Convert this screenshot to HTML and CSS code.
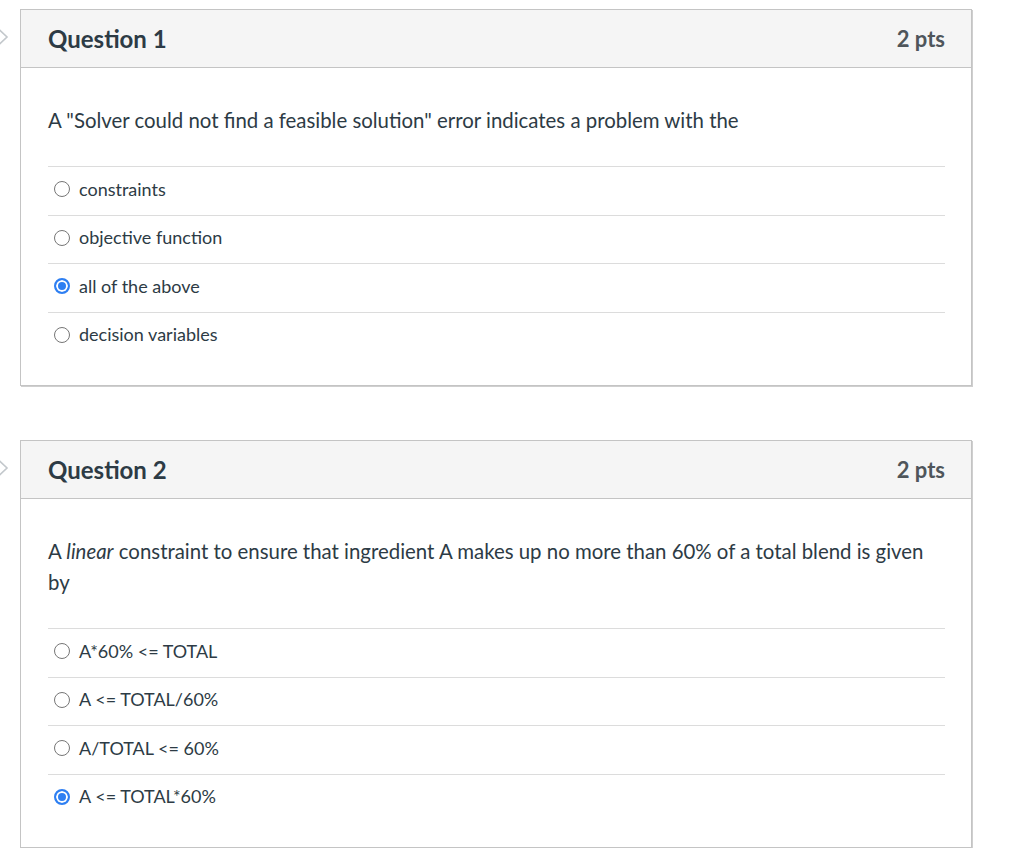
FILE: index.html
```html
<!DOCTYPE html>
<html>
<head>
<meta charset="utf-8">
<link rel="stylesheet" href="styles.css">
</head>
<body>
<div class="question-row">
  <div class="chev"><svg width="12" height="18" viewBox="0 0 12 18"><path d="M1 1.5 L9 9 L1 16.5" fill="none" stroke="#c3c8cc" stroke-width="1.6"/></svg></div>
  <div class="card">
    <div class="card-head">
      <span class="q-title">Question 1</span>
      <span class="q-pts">2 pts</span>
    </div>
    <div class="card-body">
      <div class="q-text">A "Solver could not find a feasible solution" error indicates a problem with the</div>
      <div class="answers">
        <div class="answer"><span class="radio"></span><span>constraints</span></div>
        <div class="answer"><span class="radio"></span><span>objective function</span></div>
        <div class="answer"><span class="radio checked"></span><span>all of the above</span></div>
        <div class="answer"><span class="radio"></span><span>decision variables</span></div>
      </div>
    </div>
  </div>
</div>
<div class="question-row second">
  <div class="chev"><svg width="12" height="18" viewBox="0 0 12 18"><path d="M1 1.5 L9 9 L1 16.5" fill="none" stroke="#c3c8cc" stroke-width="1.6"/></svg></div>
  <div class="card">
    <div class="card-head">
      <span class="q-title">Question 2</span>
      <span class="q-pts">2 pts</span>
    </div>
    <div class="card-body">
      <div class="q-text">A <em>linear</em> constraint to ensure that ingredient A makes up no more than 60% of a total blend is given by</div>
      <div class="answers">
        <div class="answer"><span class="radio"></span><span>A*60% &lt;= TOTAL</span></div>
        <div class="answer"><span class="radio"></span><span>A &lt;= TOTAL/60%</span></div>
        <div class="answer"><span class="radio"></span><span>A/TOTAL &lt;= 60%</span></div>
        <div class="answer"><span class="radio checked"></span><span>A &lt;= TOTAL*60%</span></div>
      </div>
    </div>
  </div>
</div>
</body>
</html>
```
FILE: styles.css
```css
html, body {
  margin: 0;
  padding: 0;
  background: #fff;
}
body {
  font-family: Lato, "Noto Sans", sans-serif;
  color: #2d3b45;
  padding-top: 9px;
}
.question-row {
  display: flex;
  align-items: flex-start;
}
.question-row.second {
  margin-top: 54px;
}
.chev {
  width: 20px;
  flex: 0 0 20px;
  padding-top: 19px;
  overflow: hidden;
}
.chev svg {
  display: block;
  margin-left: -2px;
}
.card {
  width: 950px;
  border: 1px solid #c4c4c4;
  box-shadow: 1px 1px 0 #cfcfcf;
}
.card-head {
  height: 57px;
  background: #f5f5f5;
  border-bottom: 1px solid #c4c4c4;
  display: flex;
  align-items: center;
  justify-content: space-between;
  padding: 0 26px 0 27px;
}
.q-title {
  font-size: 24px;
  font-weight: 700;
  color: #2d3b45;
}
.q-pts {
  font-size: 22px;
  font-weight: 700;
  color: #4f565b;
}
.card-body {
  padding: 37px 26px 25px 27px;
}
.q-text {
  font-size: 20.4px;
  line-height: 31px;
  padding-right: 12px;
}
.answers {
  margin-top: 30px;
}
.answer {
  border-top: 1px solid #dcdcdc;
  display: flex;
  align-items: center;
  padding: 8.5px 0 12px 6px;
  font-size: 18px;
  line-height: 27px;
}
.radio {
  width: 16px;
  height: 16px;
  box-sizing: border-box;
  border: 1px solid #767676;
  border-radius: 50%;
  background: #fff;
  margin-right: 9px;
  flex: 0 0 16px;
}
.radio.checked {
  border: 2px solid #2e7ff2;
  background: #2e7ff2;
  box-shadow: inset 0 0 0 2px #fff;
}
```
